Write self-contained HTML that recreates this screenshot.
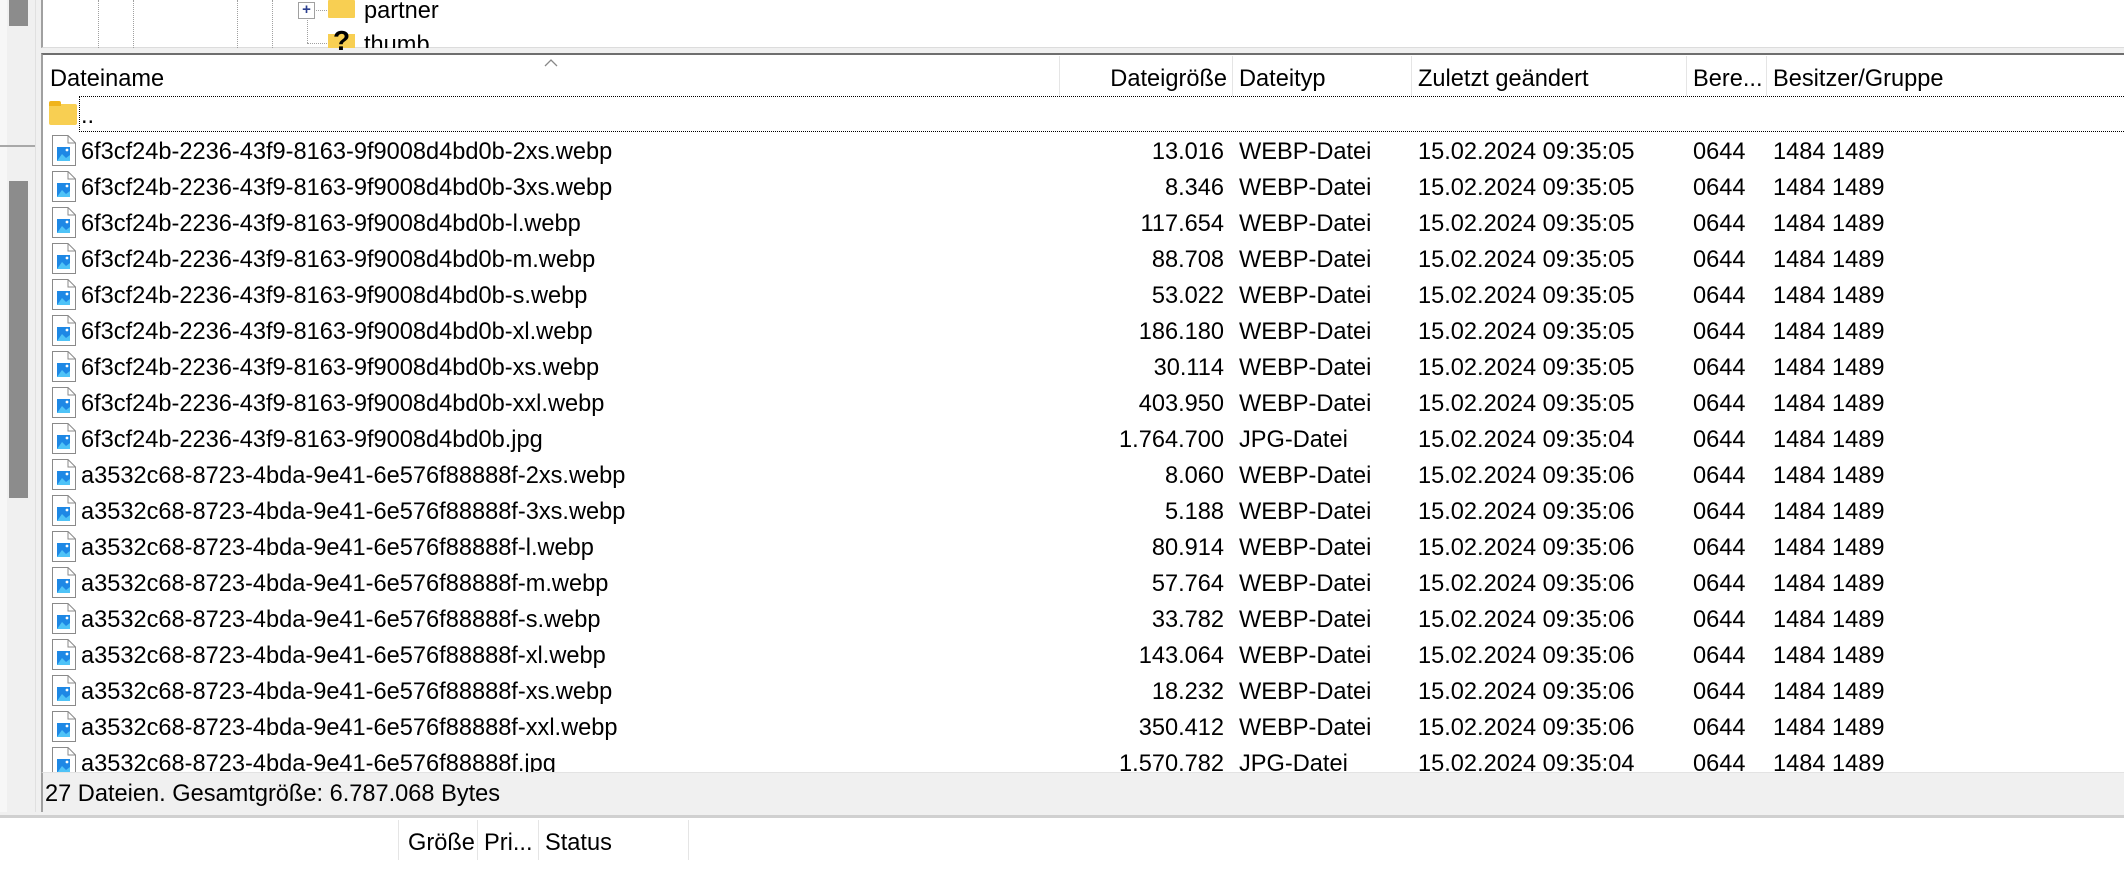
<!DOCTYPE html>
<html><head><meta charset="utf-8"><style>
*{margin:0;padding:0;box-sizing:border-box}
body{width:2124px;height:896px;overflow:hidden;background:#f0f0f0;font-family:"Liberation Sans",sans-serif;font-size:23.6px;color:#000;position:relative}
.a{position:absolute}
.t{position:absolute;white-space:nowrap;line-height:38px}
.dv{position:absolute;width:0;border-left:1px dotted #a0a0a0}
.hs{position:absolute;top:56px;height:40px;width:1px;background:#e5e5e5}
</style></head><body>
<div class="a" style="left:0;top:0;width:7px;height:812px;background:#f7f7f7"></div>
<div class="a" style="left:9px;top:0;width:19px;height:26px;background:#8c8c8c"></div>
<div class="a" style="left:0;top:145px;width:36px;height:2px;background:#a8a8a8"></div>
<div class="a" style="left:9px;top:181px;width:19px;height:317px;background:#8c8c8c"></div>
<div class="a" style="left:35px;top:0;width:1px;height:812px;background:#e0e0e0"></div>

<div class="a" style="left:41px;top:0;width:2083px;height:48px;background:#fff;border-left:2px solid #a0a0a0;border-bottom:1px solid #dcdcdc"></div>
<div class="dv" style="left:98px;top:0;height:48px"></div>
<div class="dv" style="left:133px;top:0;height:48px"></div>
<div class="dv" style="left:237px;top:0;height:48px"></div>
<div class="dv" style="left:272px;top:0;height:48px"></div>
<div class="dv" style="left:307px;top:17px;height:26px"></div>
<div class="a" style="left:307px;top:43px;width:20px;border-top:1px dotted #a0a0a0"></div>
<div class="a" style="left:316px;top:10px;width:11px;border-top:1px dotted #a0a0a0"></div>
<div class="a" style="left:298px;top:2px;width:17px;height:17px;border:1px solid #a0a0a0;background:#fff;color:#2b3f8f;font:bold 15px 'Liberation Sans';text-align:center;line-height:14px">+</div>
<div class="a" style="left:328px;top:0;width:27px;height:18px;background:#f8cf52;border-radius:1px"></div>
<div class="t" style="left:364px;top:-8px">partner</div>
<div class="a" style="left:328px;top:34px;width:27px;height:14px;background:#f8cf52"></div>
<div class="t" style="left:333px;top:22px;font-weight:bold;font-size:28px">?</div>
<div class="t" style="left:364px;top:26px;height:22px;overflow:hidden;line-height:38px">thumb</div>

<div class="a" style="left:41px;top:53px;width:2083px;height:719px;background:#fff;border-left:2px solid #a0a0a0;border-top:2px solid #6e6e6e"></div>
<div class="hs" style="left:1059px"></div>
<div class="hs" style="left:1232px"></div>
<div class="hs" style="left:1411px"></div>
<div class="hs" style="left:1686px"></div>
<div class="hs" style="left:1766px"></div>
<svg class="a" style="left:544px;top:59px" width="14" height="8"><path d="M1 7 L7 1 L13 7" fill="none" stroke="#888" stroke-width="1.3"/></svg>
<div class="t" style="left:50px;top:60px">Dateiname</div>
<div class="t" style="left:1059px;top:60px;width:168px;text-align:right">Dateigröße</div>
<div class="t" style="left:1239px;top:60px">Dateityp</div>
<div class="t" style="left:1418px;top:60px">Zuletzt geändert</div>
<div class="t" style="left:1693px;top:60px">Bere...</div>
<div class="t" style="left:1773px;top:60px">Besitzer/Gruppe</div>
<div class="a" style="left:79px;top:96px;width:2045px;height:36px;border:1px dotted #000;border-right:none"></div>
<div class="a" style="left:49px;top:104px;width:28px;height:21px;background:#f8cf52;border-radius:2px"></div>
<div class="a" style="left:49px;top:101px;width:12px;height:5px;background:#f0b41c;border-radius:2px 2px 0 0"></div>
<div class="t" style="left:81px;top:97px">..</div>

<div class="a" style="left:41px;top:772px;width:2083px;height:40px;background:#f0f0f0;border-left:2px solid #a0a0a0;border-top:1px solid #e3e3e3"></div>
<div class="t" style="left:45px;top:775px">27 Dateien. Gesamtgröße: 6.787.068 Bytes</div>
<div class="a" style="left:0;top:815px;width:2124px;height:3px;background:#d0d0d0"></div>
<div class="a" style="left:0;top:818px;width:2124px;height:78px;background:#fff"></div>
<div class="a" style="left:398px;top:820px;width:1px;height:40px;background:#e5e5e5"></div>
<div class="a" style="left:477px;top:820px;width:1px;height:40px;background:#e5e5e5"></div>
<div class="a" style="left:538px;top:820px;width:1px;height:40px;background:#e5e5e5"></div>
<div class="a" style="left:688px;top:820px;width:1px;height:40px;background:#e5e5e5"></div>
<div class="t" style="left:408px;top:824px">Größe</div>
<div class="t" style="left:484px;top:824px">Pri...</div>
<div class="t" style="left:545px;top:824px">Status</div>

<div style="position:absolute;left:0;top:0;width:2124px;height:772px;overflow:hidden">
<script>
var d=[["6f3cf24b-2236-43f9-8163-9f9008d4bd0b-2xs.webp","13.016","WEBP","05"],["6f3cf24b-2236-43f9-8163-9f9008d4bd0b-3xs.webp","8.346","WEBP","05"],["6f3cf24b-2236-43f9-8163-9f9008d4bd0b-l.webp","117.654","WEBP","05"],["6f3cf24b-2236-43f9-8163-9f9008d4bd0b-m.webp","88.708","WEBP","05"],["6f3cf24b-2236-43f9-8163-9f9008d4bd0b-s.webp","53.022","WEBP","05"],["6f3cf24b-2236-43f9-8163-9f9008d4bd0b-xl.webp","186.180","WEBP","05"],["6f3cf24b-2236-43f9-8163-9f9008d4bd0b-xs.webp","30.114","WEBP","05"],["6f3cf24b-2236-43f9-8163-9f9008d4bd0b-xxl.webp","403.950","WEBP","05"],["6f3cf24b-2236-43f9-8163-9f9008d4bd0b.jpg","1.764.700","JPG","04"],["a3532c68-8723-4bda-9e41-6e576f88888f-2xs.webp","8.060","WEBP","06"],["a3532c68-8723-4bda-9e41-6e576f88888f-3xs.webp","5.188","WEBP","06"],["a3532c68-8723-4bda-9e41-6e576f88888f-l.webp","80.914","WEBP","06"],["a3532c68-8723-4bda-9e41-6e576f88888f-m.webp","57.764","WEBP","06"],["a3532c68-8723-4bda-9e41-6e576f88888f-s.webp","33.782","WEBP","06"],["a3532c68-8723-4bda-9e41-6e576f88888f-xl.webp","143.064","WEBP","06"],["a3532c68-8723-4bda-9e41-6e576f88888f-xs.webp","18.232","WEBP","06"],["a3532c68-8723-4bda-9e41-6e576f88888f-xxl.webp","350.412","WEBP","06"],["a3532c68-8723-4bda-9e41-6e576f88888f.jpg","1.570.782","JPG","04"]];
var h="";
for(var i=0;i<d.length;i++){var y=134+36*i;var r=d[i];var ty=y-1;
h+='<svg class="a" style="left:52px;top:'+(y+1)+'px" width="24" height="31"><path d="M0.5 0.5 H16 L23.5 8 V30.5 H0.5 Z" fill="#fff" stroke="#8a8a8a"/><path d="M16 0.5 V8 H23.5" fill="none" stroke="#8a8a8a"/><rect x="5" y="12" width="13" height="14" fill="#1e88e5"/><path d="M5 26 L10 19 L14 23 L18 20 V26 Z" fill="#4fc3f7"/><circle cx="15" cy="15" r="1.4" fill="#fff"/></svg>';
h+='<div class="t" style="left:81px;top:'+ty+'px">'+r[0]+'</div>';
h+='<div class="t" style="left:1059px;width:165px;text-align:right;top:'+ty+'px">'+r[1]+'</div>';
h+='<div class="t" style="left:1239px;top:'+ty+'px">'+r[2]+'-Datei</div>';
h+='<div class="t" style="left:1418px;top:'+ty+'px">15.02.2024 09:35:'+r[3]+'</div>';
h+='<div class="t" style="left:1693px;top:'+ty+'px">0644</div>';
h+='<div class="t" style="left:1773px;top:'+ty+'px">1484 1489</div>';}
document.write(h);
</script>
</div>
</body></html>
